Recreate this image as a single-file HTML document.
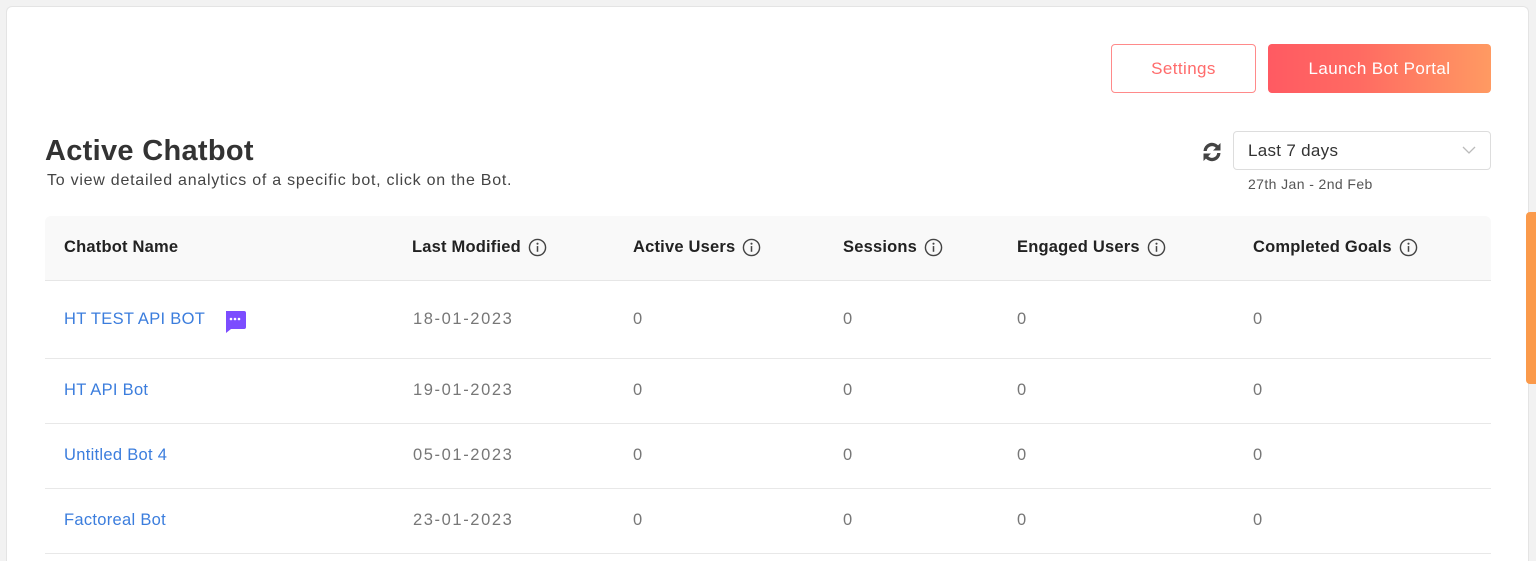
<!DOCTYPE html>
<html><head><style>
*{margin:0;padding:0;box-sizing:border-box}
html,body{width:1536px;height:561px;overflow:hidden}
body{background:#f2f2f2;font-family:"Liberation Sans",sans-serif;position:relative}
.card{position:absolute;left:6px;top:6px;width:1523px;height:555px;background:#fff;border:1px solid #e4e4e4;border-bottom:none;border-radius:6px 6px 0 0}
.thumb{position:absolute;left:1526px;top:212px;width:10px;height:172px;background:#fb9a4b;border-radius:4px 0 0 4px}
.btn{position:absolute;top:44px;height:49px;border-radius:4px;font-size:17px;display:flex;align-items:center;justify-content:center;letter-spacing:0.4px}
.set{left:1111px;width:145px;border:1px solid #ff8a8a;color:#ff6b6b;background:#fff}
.lau{left:1268px;width:223px;background:linear-gradient(90deg,#ff5a62,#ff6a62 40%,#ff9a62);color:#fff}
h1{position:absolute;left:45px;top:135px;font-size:29px;font-weight:bold;color:#333;letter-spacing:0.3px}
.sub{position:absolute;left:47px;top:172px;font-size:16px;color:#444;letter-spacing:0.75px}
.sel{position:absolute;left:1233px;top:131px;width:258px;height:39px;border:1px solid #ddd;border-radius:4px;font-size:17px;color:#333;padding:9px 0 0 14px;letter-spacing:0.3px}
.sel svg{position:absolute;right:14px;top:14px}
.range{position:absolute;left:1248px;top:176px;font-size:14px;color:#555;letter-spacing:0.4px}
.ref{position:absolute;left:1200px;top:140px}
.thead{position:absolute;left:45px;top:216px;width:1446px;height:65px;background:#f9f9f9;border-bottom:1px solid #e6e6e6;border-radius:6px 6px 0 0}
.c{position:absolute;font-size:16.5px;white-space:nowrap}
.h{font-weight:bold;color:#222;top:238px;display:flex;align-items:center;gap:7px;letter-spacing:0.2px}
.line{position:absolute;left:45px;width:1446px;height:1px;background:#e8e8e8}
.v{color:#777;letter-spacing:1.6px}
.l{color:#3b7ddd;letter-spacing:0.3px}
</style></head><body>
<div class="card"></div>
<div class="thumb"></div>
<div class="btn set">Settings</div>
<div class="btn lau">Launch Bot Portal</div>
<h1>Active Chatbot</h1>
<div class="sub">To view detailed analytics of a specific bot, click on the Bot.</div>
<svg class="ref" width="24" height="24" viewBox="0 0 24 24"><path d="M3.5 11a8.5 8.5 0 0 1 14.6-5.6L20.5 3v7.5H13l2.8-2.8A5.3 5.3 0 0 0 6.8 11z M20.5 13a8.5 8.5 0 0 1-14.6 5.6L3.5 21v-7.5H11l-2.8 2.8A5.3 5.3 0 0 0 17.2 13z" fill="#444"/></svg>
<div class="sel">Last 7 days<svg width="14" height="9" viewBox="0 0 14 9"><path d="M1 1l6 6 6-6" fill="none" stroke="#bbb" stroke-width="1.3"/></svg></div>
<div class="range">27th Jan - 2nd Feb</div>
<div class="thead"></div>
<div class="c h" style="left:64px">Chatbot Name</div>
<div class="c h" style="left:412px">Last Modified <svg width="19" height="19" viewBox="0 0 20 20"><circle cx="10" cy="10" r="8.5" fill="none" stroke="#444" stroke-width="1.5"/><rect x="9.2" y="8.5" width="1.6" height="6" fill="#444"/><circle cx="10" cy="6" r="1.1" fill="#444"/></svg></div>
<div class="c h" style="left:633px">Active Users <svg width="19" height="19" viewBox="0 0 20 20"><circle cx="10" cy="10" r="8.5" fill="none" stroke="#444" stroke-width="1.5"/><rect x="9.2" y="8.5" width="1.6" height="6" fill="#444"/><circle cx="10" cy="6" r="1.1" fill="#444"/></svg></div>
<div class="c h" style="left:843px">Sessions <svg width="19" height="19" viewBox="0 0 20 20"><circle cx="10" cy="10" r="8.5" fill="none" stroke="#444" stroke-width="1.5"/><rect x="9.2" y="8.5" width="1.6" height="6" fill="#444"/><circle cx="10" cy="6" r="1.1" fill="#444"/></svg></div>
<div class="c h" style="left:1017px">Engaged Users <svg width="19" height="19" viewBox="0 0 20 20"><circle cx="10" cy="10" r="8.5" fill="none" stroke="#444" stroke-width="1.5"/><rect x="9.2" y="8.5" width="1.6" height="6" fill="#444"/><circle cx="10" cy="6" r="1.1" fill="#444"/></svg></div>
<div class="c h" style="left:1253px">Completed Goals <svg width="19" height="19" viewBox="0 0 20 20"><circle cx="10" cy="10" r="8.5" fill="none" stroke="#444" stroke-width="1.5"/><rect x="9.2" y="8.5" width="1.6" height="6" fill="#444"/><circle cx="10" cy="6" r="1.1" fill="#444"/></svg></div>

<div class="c l" style="left:64px;top:310px">HT TEST API BOT</div>
<svg style="position:absolute;left:223px;top:309px" width="24" height="24" viewBox="0 0 24 24"><path d="M3 2h18a2 2 0 0 1 2 2v14a2 2 0 0 1-2 2H8l-5 4z" fill="#7c4dff"/><circle cx="8" cy="10" r="1.3" fill="#fff"/><circle cx="12" cy="10" r="1.3" fill="#fff"/><circle cx="16" cy="10" r="1.3" fill="#fff"/></svg>
<div class="c v" style="left:413px;top:310px">18-01-2023</div>
<div class="c v" style="left:633px;top:310px">0</div><div class="c v" style="left:843px;top:310px">0</div><div class="c v" style="left:1017px;top:310px">0</div><div class="c v" style="left:1253px;top:310px">0</div>
<div class="line" style="top:358px"></div>
<div class="c l" style="left:64px;top:381px">HT API Bot</div>
<div class="c v" style="left:413px;top:381px">19-01-2023</div>
<div class="c v" style="left:633px;top:381px">0</div><div class="c v" style="left:843px;top:381px">0</div><div class="c v" style="left:1017px;top:381px">0</div><div class="c v" style="left:1253px;top:381px">0</div>
<div class="line" style="top:423px"></div>
<div class="c l" style="left:64px;top:446px">Untitled Bot 4</div>
<div class="c v" style="left:413px;top:446px">05-01-2023</div>
<div class="c v" style="left:633px;top:446px">0</div><div class="c v" style="left:843px;top:446px">0</div><div class="c v" style="left:1017px;top:446px">0</div><div class="c v" style="left:1253px;top:446px">0</div>
<div class="line" style="top:488px"></div>
<div class="c l" style="left:64px;top:511px">Factoreal Bot</div>
<div class="c v" style="left:413px;top:511px">23-01-2023</div>
<div class="c v" style="left:633px;top:511px">0</div><div class="c v" style="left:843px;top:511px">0</div><div class="c v" style="left:1017px;top:511px">0</div><div class="c v" style="left:1253px;top:511px">0</div>
<div class="line" style="top:553px"></div>
</body></html>
